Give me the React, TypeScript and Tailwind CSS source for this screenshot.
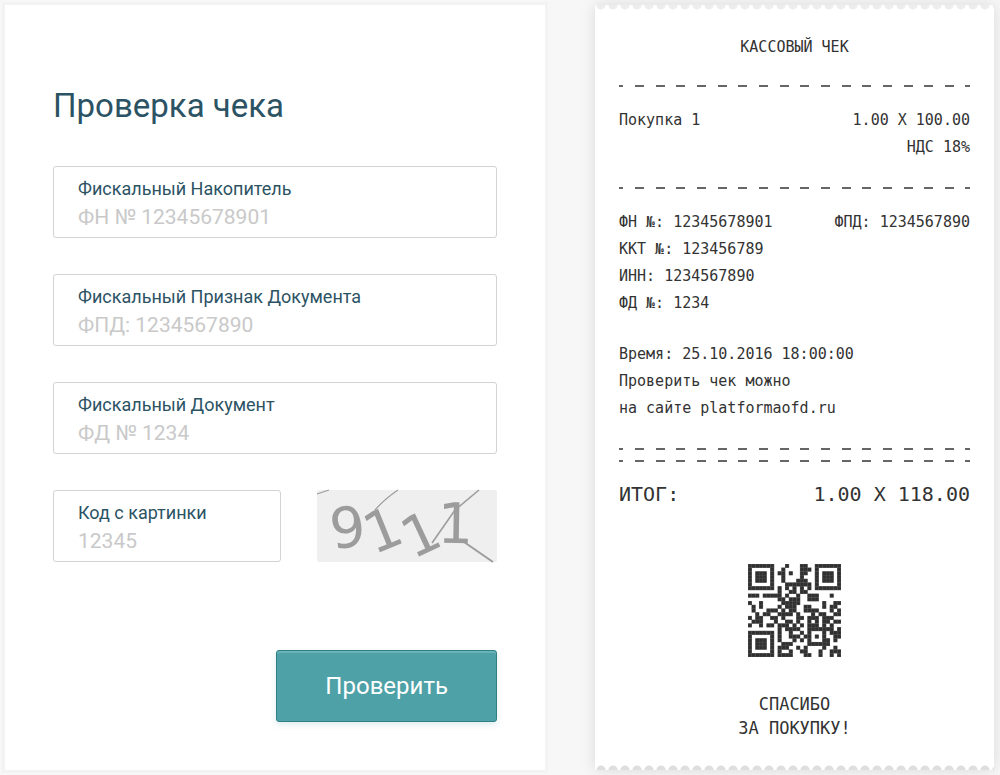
import { useId } from "react";

type FieldProps = { label: string; placeholder: string; className?: string };

function Field({ label, placeholder, className = "" }: FieldProps) {
  const id = useId();
  return (
    <div className={`flex h-[72px] flex-col rounded-[3px] border border-[#d3d3d3] px-6 pt-2.5 ${className}`}>
      <label htmlFor={id} className="text-lg leading-6 whitespace-nowrap text-[#2c5364]">
        {label}
      </label>
      <input
        id={id}
        type="text"
        placeholder={placeholder}
        className="h-8 w-full min-w-0 bg-transparent text-[21px] text-[#2c5364] outline-none placeholder:text-[#c9c9c9]"
      />
    </div>
  );
}

function Captcha() {
  return (
    <svg
      viewBox="0 0 180 72"
      role="img"
      aria-label="Картинка с кодом"
      className="h-[72px] w-[180px] shrink-0 overflow-visible rounded-[2px] bg-[#efefef]"
    >
      <g fill="none" stroke="#9c9c9c">
        <path d="M0 4 12 0" strokeWidth="1.2" />
        <path d="M58 20C65 12 72 6 81 0" strokeWidth="1.2" />
        <path d="M115 53 138 20 162 0" strokeWidth="1.6" />
        <path d="M147 52 176 72" strokeWidth="2" />
      </g>
      <g fill="#9c9c9c" fontFamily="'DejaVu Sans', sans-serif" fontSize="56" textAnchor="middle">
        <text transform="translate(33 57) rotate(-7)">9</text>
        <text transform="translate(73 58) rotate(-22)">1</text>
        <text transform="translate(112 62) rotate(-25)">1</text>
        <text transform="translate(138 53) rotate(1)">1</text>
      </g>
    </svg>
  );
}

const QR_ROWS = [
  "XXXXXXX...X...XX..XXXXXXX",
  "X.....X..X....XXX.X.....X",
  "X.XXX.X.XX.X..XX..X.XXX.X",
  "X.XXX.X..X....X...X.XXX.X",
  "X.XXX.X..X...XXX..X.XXX.X",
  "X.....X...XXXXXXX.X.....X",
  "XXXXXXX.X.X.X.X.X.XXXXXXX",
  "........X..XX.XX.........",
  "XXX.XXXXX.X..X..XXX...X..",
  "........XX.XXX..XXX......",
  "X..X.....XXXXX......X..XX",
  ".X.X....X.XXX..XX...X.XX.",
  ".X...XXX.X.XX..XXXX...X.X",
  "..X.XX..XXXX.X...X.XX..XX",
  "X.XX..XX.X...XX.XXX.XXX..",
  ".XXX...X..XX.X..X.X.XX.XX",
  "X..X.XX.XXX.X.X.XXX.X.X..",
  "........X.XXXX..XXXXXXX.X",
  "XXXXXXX.X..X..X.X...X.XXX",
  "X.....X.X..XXX.XX.X.X..XX",
  "X.XXX.X.X...X.X.X...XX.X.",
  "X.XXX.X..XXX....XXXXXX...",
  "X.XXX.X.XXX..X.X....X..X.",
  "X.....X.X..X..XX...X..XXX",
  "XXXXXXX.XXXX...XX..X..X.X",
];

const QR_CELLS = QR_ROWS.flatMap((row, y) =>
  [...row].flatMap((cell, x) => (cell === "X" ? [{ x, y }] : [])),
);

function QrCode() {
  return (
    <svg viewBox="0 0 25 25" role="img" aria-label="QR-код чека" className="size-[93px]">
      {QR_CELLS.map(({ x, y }) => (
        <rect key={`seam-${x}-${y}`} x={x - 0.05} y={y - 0.05} width="1.1" height="1.1" fill="#5c5c5c" />
      ))}
      {QR_CELLS.map(({ x, y }) => (
        <rect key={`cell-${x}-${y}`} x={x + 0.05} y={y + 0.05} width="0.9" height="0.9" fill="#303030" />
      ))}
    </svg>
  );
}

function Dashes() {
  return (
    <div className="h-0.5 bg-[repeating-linear-gradient(to_right,#666_0_1.28%,transparent_1.28%_4.6%,#666_4.6%_5.882%)]" />
  );
}

function Receipt() {
  return (
    <section className="flex flex-col shadow-[0_0_14px_rgba(0,0,0,0.12)]">
      <div className="h-[5px] bg-white bg-[radial-gradient(circle_at_50%_0,#ededed_4px,transparent_5px)] bg-[length:12px_5px]" />
      <div className="flex-1 bg-white px-6 pt-6 font-['DejaVu_Sans_Mono','Liberation_Mono',monospace] text-[15px] leading-[27px] text-[#333]">
        <h2 className="text-center">КАССОВЫЙ ЧЕК</h2>
        <div className="pt-6 pb-5">
          <Dashes />
        </div>
        <div className="flex justify-between">
          <span>Покупка 1</span>
          <span>1.00 X 100.00</span>
        </div>
        <p className="text-right">НДС 18%</p>
        <div className="pt-[26px] pb-5">
          <Dashes />
        </div>
        <div className="flex justify-between">
          <span>ФН №: 12345678901</span>
          <span>ФПД: 1234567890</span>
        </div>
        <p>ККТ №: 123456789</p>
        <p>ИНН: 1234567890</p>
        <p>ФД №: 1234</p>
        <p className="pt-6">Время: 25.10.2016 18:00:00</p>
        <p>Проверить чек можно</p>
        <p>на сайте platformaofd.ru</p>
        <div className="flex flex-col gap-2.5 pt-[26px] pb-4">
          <Dashes />
          <Dashes />
        </div>
        <div className="flex justify-between text-xl leading-8">
          <span>ИТОГ:</span>
          <span>1.00 X 118.00</span>
        </div>
        <div className="flex justify-center pt-[54px]">
          <QrCode />
        </div>
        <p className="pt-[35px] text-center text-[17px] leading-6">
          СПАСИБО
          <br />
          ЗА ПОКУПКУ!
        </p>
      </div>
      <div className="h-[5px] bg-white bg-[radial-gradient(circle_at_50%_100%,#dedede_4px,transparent_5px)] bg-[length:12px_5px]" />
    </section>
  );
}

export default function App() {
  return (
    <main className="grid min-h-screen grid-cols-[540fr_399fr] gap-[50px] bg-[#f7f7f7] py-[5px] pr-1.5 pl-[5px] font-[Roboto,sans-serif]">
      <form
        className="flex flex-col bg-white px-12 pt-[78px] shadow-[0_0_0_3px_#f3f3f3]"
        onSubmit={(event) => event.preventDefault()}
      >
        <h1 className="text-[33px] leading-[46px] text-[#2c5364]">Проверка чека</h1>
        <div className="flex flex-col gap-9 pt-[37px]">
          <Field label="Фискальный Накопитель" placeholder="ФН № 12345678901" />
          <Field label="Фискальный Признак Документа" placeholder="ФПД: 1234567890" />
          <Field label="Фискальный Документ" placeholder="ФД № 1234" />
          <div className="flex gap-9">
            <Field label="Код с картинки" placeholder="12345" className="min-w-0 flex-1" />
            <Captcha />
          </div>
        </div>
        <button
          type="submit"
          className="mt-[88px] h-[72px] self-end rounded-[3px] border border-[#2f7f84] bg-[#4da1a7] px-12 text-2xl text-white shadow-[inset_0_2px_0_#6bb5ba,0_3px_6px_rgba(47,127,132,0.15)]"
        >
          Проверить
        </button>
      </form>
      <Receipt />
    </main>
  );
}
